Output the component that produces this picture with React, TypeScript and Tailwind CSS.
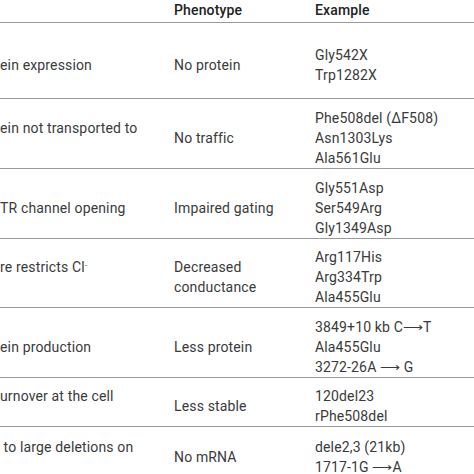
const rows = [
  {
    h: "h-[76px]",
    cause: ["ein expression"],
    phenotype: ["No protein"],
    examples: ["Gly542X", "Trp1282X"],
  },
  {
    h: "h-[70px]",
    cause: ["ein not transported to", ""],
    phenotype: ["No traffic"],
    examples: ["Phe508del (ΔF508)", "Asn1303Lys", "Ala561Glu"],
  },
  {
    h: "h-[70px]",
    cause: ["TR channel opening"],
    phenotype: ["Impaired gating"],
    examples: ["Gly551Asp", "Ser549Arg", "Gly1349Asp"],
  },
  {
    h: "h-[69px]",
    cause: ["cl", ""],
    phenotype: ["Decreased", "conductance"],
    examples: ["Arg117His", "Arg334Trp", "Ala455Glu"],
  },
  {
    h: "h-[70px]",
    cause: ["ein production"],
    phenotype: ["Less protein"],
    examples: ["3849+10 kb C⟶T", "Ala455Glu", "3272-26A ⟶ G"],
  },
  {
    h: "h-[49px]",
    cause: ["urnover at the cell", ""],
    phenotype: ["Less stable"],
    examples: ["120del23", "rPhe508del"],
  },
  {
    h: "h-[52px]",
    cause: ["\u00a0to large deletions on", ""],
    phenotype: ["No mRNA"],
    examples: ["dele2,3 (21kb)", "1717-1G ⟶A"],
  },
];

function Lines({ items }: { items: string[] }) {
  return (
    <div className="flex flex-col">
      {items.map((t, i) =>
        t === "cl" ? (
          <span key={i} className="whitespace-nowrap">
            re restricts Cl<sup className="text-[8px]">-</sup>
          </span>
        ) : (
          <span key={i} className="whitespace-nowrap">
            {t === "" ? "\u00a0" : t}
          </span>
        )
      )}
    </div>
  );
}

export default function App() {
  return (
    <div className="h-[474px] w-[474px] overflow-hidden bg-white font-['Roboto',sans-serif] text-[14px] leading-[20px] tracking-[0.15px] text-[#3a3a3a]">
      <div className="grid h-[23px] grid-cols-[174px_141px_1fr] items-center border-b-[1.5px] border-[#9a9a9a] pb-[3px] font-medium text-[#222]">
        <div />
        <div>Phenotype</div>
        <div>Example</div>
      </div>
      {rows.map((r, i) => (
        <div
          key={i}
          className={`grid ${r.h} grid-cols-[174px_141px_1fr] items-center border-b-[1.5px] border-[#9a9a9a] pt-2`}
        >
          <Lines items={r.cause} />
          <Lines items={r.phenotype} />
          <Lines items={r.examples} />
        </div>
      ))}
    </div>
  );
}
